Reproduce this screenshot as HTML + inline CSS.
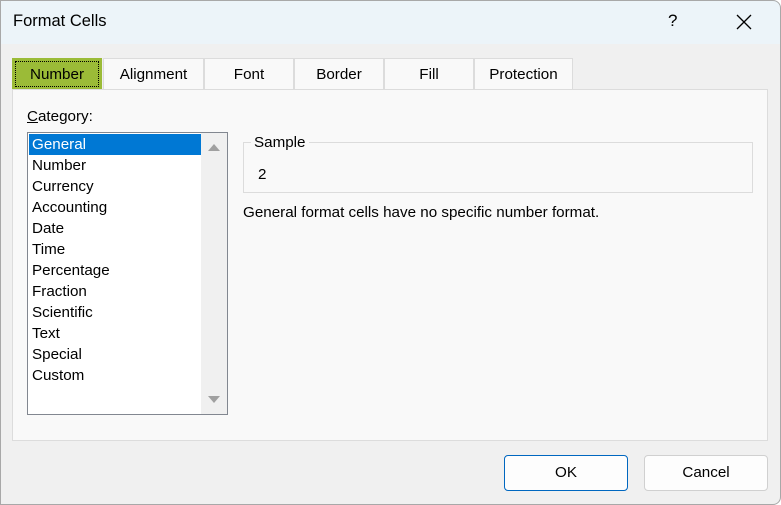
<!DOCTYPE html><html><head><style>
*{box-sizing:border-box;margin:0;padding:0}
body{width:781px;height:505px;overflow:hidden;background:#fff;font-family:"Liberation Sans",sans-serif;font-size:15.2px;color:#000;position:relative}
.win{position:absolute;left:0;top:0;width:781px;height:505px;background:#f0f0f0;border-radius:0 8px 8px 0}
.frame{position:absolute;left:0;top:0;width:781px;height:505px;border:1px solid #a8a8a8;border-radius:0 8px 8px 0;pointer-events:none}
.title{position:absolute;left:0;top:0;width:781px;height:44px;background:#ecf4f9;border-radius:0 8px 0 0}
.abs{position:absolute}
.tab{position:absolute;top:58px;height:31px;background:#f9f9f9;border:1px solid #dcdcdc;border-bottom:none;text-align:center;line-height:32px}
.panel{position:absolute;left:12px;top:89px;width:756px;height:352px;background:#f9f9f9;border:1px solid #dcdcdc}
.item{position:absolute;left:4px;height:21px;line-height:21px}
.btn{position:absolute;top:455px;width:124px;height:36px;background:#fdfdfd;border:1px solid #d0d0d0;border-radius:4px;text-align:center;line-height:34px}
</style></head><body><div class="win">
<div class="title"></div>
<div class="abs" style="left:13px;top:12px;font-size:16.5px">Format Cells</div>
<div class="abs" style="left:668px;top:11px;font-size:17px">?</div>
<svg class="abs" style="left:736px;top:14px" width="16" height="16"><path d="M1 1L15 15M15 1L1 15" stroke="#000" stroke-width="1.3"/></svg>
<div class="panel"></div>
<div class="tab" style="left:12px;width:90px;background:#9bbb37;border:1px solid #9bbb37"><div style="position:absolute;left:2px;top:2px;right:2px;bottom:1px;border:1px dotted #000"></div>Number</div>
<div class="tab" style="left:103px;width:101px">Alignment</div>
<div class="tab" style="left:204px;width:90px">Font</div>
<div class="tab" style="left:294px;width:90px">Border</div>
<div class="tab" style="left:384px;width:90px">Fill</div>
<div class="tab" style="left:474px;width:99px">Protection</div>
<div class="abs" style="left:27px;top:108px"><u>C</u>ategory:</div>
<div class="abs" style="left:27px;top:132px;width:201px;height:283px;background:#fff;border:1px solid #828790">
<div class="abs" style="left:1px;top:1px;width:172px;height:21px;background:#0078d4"></div>
<div class="abs" style="left:173px;top:0;width:26px;height:281px;background:#f0f0f0"></div>
<svg class="abs" style="left:179px;top:10px" width="14" height="9"><path d="M1 8L7 1L13 8Z" fill="#a0a0a0"/></svg>
<svg class="abs" style="left:179px;top:262px" width="14" height="9"><path d="M1 1L7 8L13 1Z" fill="#a0a0a0"/></svg>
<div class="item" style="top:1px;color:#fff">General</div>
<div class="item" style="top:22px">Number</div>
<div class="item" style="top:43px">Currency</div>
<div class="item" style="top:64px">Accounting</div>
<div class="item" style="top:85px">Date</div>
<div class="item" style="top:106px">Time</div>
<div class="item" style="top:127px">Percentage</div>
<div class="item" style="top:148px">Fraction</div>
<div class="item" style="top:169px">Scientific</div>
<div class="item" style="top:190px">Text</div>
<div class="item" style="top:211px">Special</div>
<div class="item" style="top:232px">Custom</div>
</div>
<div class="abs" style="left:243px;top:142px;width:510px;height:51px;border:1px solid #dcdcdc"></div>
<div class="abs" style="left:251px;top:134px;padding:0 3px;background:#f9f9f9">Sample</div>
<div class="abs" style="left:258px;top:166px">2</div>
<div class="abs" style="left:243px;top:204px">General format cells have no specific number format.</div>
<div class="btn" style="left:504px;border-color:#0067c0">OK</div>
<div class="btn" style="left:644px">Cancel</div>
</div><div class="frame"></div></body></html>
